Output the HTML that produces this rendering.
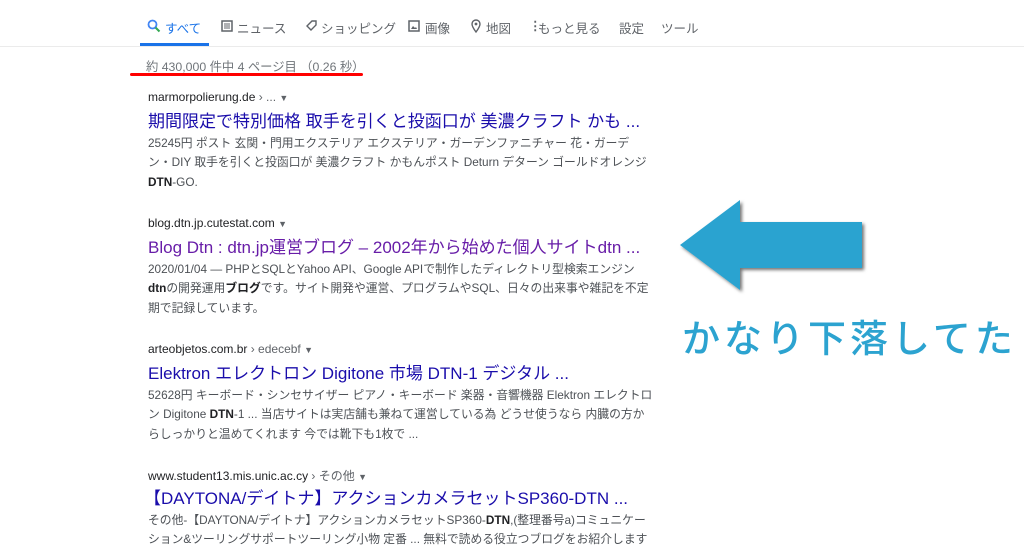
<!DOCTYPE html>
<html><head><meta charset="utf-8"><style>
body{margin:0;width:1024px;height:538px;overflow:hidden;background:#fff;font-family:"Liberation Sans","Noto Sans CJK JP",sans-serif;position:relative}
.a{position:absolute;white-space:nowrap}
.nav{font-size:12.5px;color:#5f6368;top:18px}
.url{font-size:12px;color:#202124;left:148px}
.url .c{color:#5f6368}
.t{font-size:17px;color:#1a0dab;left:148px}
.s{font-size:11.8px;color:#4d5156;left:148px;line-height:19.3px}
.s b{color:#202124}
</style></head><body>
<svg class="a" style="left:147px;top:19px" width="14" height="14" viewBox="0 0 14 14"><circle cx="5.5" cy="5.5" r="4" fill="none" stroke="#4285f4" stroke-width="1.8"/><path d="M8.5 8.5L12.5 12.5" stroke="#34a853" stroke-width="2"/></svg>
<div class="a nav" style="left:165px;color:#1a73e8">すべて</div>
<svg class="a" style="left:221px;top:20px" width="12" height="12"><rect x="1" y="1" width="10" height="10" fill="none" stroke="#5f6368" stroke-width="1.5"/><path d="M3 4h6M3 6h6M3 8h6" stroke="#5f6368"/></svg>
<div class="a nav" style="left:237px">ニュース</div>
<svg class="a" style="left:305px;top:19px" width="13" height="13"><path d="M2 7L7 2h4v4l-5 5z" fill="none" stroke="#5f6368" stroke-width="1.4"/></svg>
<div class="a nav" style="left:321px">ショッピング</div>
<svg class="a" style="left:408px;top:20px" width="12" height="12"><rect x="1" y="1" width="10" height="10" fill="none" stroke="#5f6368" stroke-width="1.5"/><path d="M3 9l2-3 2 2 1-1 1 2z" fill="#5f6368"/></svg>
<div class="a nav" style="left:425px">画像</div>
<svg class="a" style="left:470px;top:19px" width="12" height="14"><path d="M6 13C3 9 2 7 2 5a4 4 0 0 1 8 0c0 2-1 4-4 8z" fill="none" stroke="#5f6368" stroke-width="1.4"/><circle cx="6" cy="5" r="1.4" fill="#5f6368"/></svg>
<div class="a nav" style="left:486px">地図</div>
<div class="a nav" style="left:529px;font-weight:bold">⋮</div>
<div class="a nav" style="left:538px">もっと見る</div>
<div class="a nav" style="left:619px">設定</div>
<div class="a nav" style="left:661px">ツール</div>
<div class="a" style="left:140px;top:43px;width:69px;height:3px;background:#1a73e8"></div>
<div class="a" style="left:0;top:46px;width:1024px;height:1px;background:#ebebeb"></div>
<div class="a" style="left:146px;top:57px;font-size:12.3px;color:#70757a">約 430,000 件中 4 ページ目 （0.26 秒）</div>
<div class="a" style="left:130px;top:73px;width:233px;height:3px;background:#f00;border-radius:2px"></div>

<div class="a url" style="top:90px">marmorpolierung.de <span class="c">› ...</span> <span class="c" style="font-size:9px">▼</span></div>
<div class="a t" style="top:107px">期間限定で特別価格 取手を引くと投函口が 美濃クラフト かも ...</div>
<div class="a s" style="top:134px">25245円 ポスト 玄関・門用エクステリア エクステリア・ガーデンファニチャー 花・ガーデ<br>ン・DIY 取手を引くと投函口が 美濃クラフト かもんポスト Deturn デターン ゴールドオレンジ<br><b>DTN</b>-GO.</div>

<div class="a url" style="top:216px">blog.dtn.jp.cutestat.com <span class="c" style="font-size:9px">▼</span></div>
<div class="a t" style="top:233px;color:#681da8">Blog Dtn : dtn.jp運営ブログ – 2002年から始めた個人サイトdtn ...</div>
<div class="a s" style="top:260px">2020/01/04 — PHPとSQLとYahoo API、Google APIで制作したディレクトリ型検索エンジン<br><b>dtn</b>の開発運用<b>ブログ</b>です。サイト開発や運営、プログラムやSQL、日々の出来事や雑記を不定<br>期で記録しています。</div>

<div class="a url" style="top:342px">arteobjetos.com.br <span class="c">› edecebf</span> <span class="c" style="font-size:9px">▼</span></div>
<div class="a t" style="top:359px">Elektron エレクトロン Digitone 市場 DTN-1 デジタル ...</div>
<div class="a s" style="top:386px">52628円 キーボード・シンセサイザー ピアノ・キーボード 楽器・音響機器 Elektron エレクトロ<br>ン Digitone <b>DTN</b>-1 ... 当店サイトは実店舗も兼ねて運営している為 どうせ使うなら 内臓の方か<br>らしっかりと温めてくれます 今では靴下も1枚で ...</div>

<div class="a url" style="top:467px">www.student13.mis.unic.ac.cy <span class="c">› その他</span> <span class="c" style="font-size:9px">▼</span></div>
<div class="a t" style="top:484px;left:144px">【DAYTONA/デイトナ】アクションカメラセットSP360-DTN ...</div>
<div class="a s" style="top:511px">その他-【DAYTONA/デイトナ】アクションカメラセットSP360-<b>DTN</b>,(整理番号a)コミュニケー<br>ション&amp;ツーリングサポートツーリング小物 定番 ... 無料で読める役立つブログをお紹介します</div>

<svg class="a" style="left:670px;top:195px" width="210" height="110"><defs><filter id="sh"><feDropShadow dx="2" dy="2" stdDeviation="1.5" flood-color="#000" flood-opacity="0.55"/></filter></defs><path d="M10 50L70 5V27H192V73H70V95Z" fill="#2ca3d0" filter="url(#sh)"/></svg>
<div class="a" style="left:682px;top:308px;font-size:38px;font-weight:500;color:#2ca3d0;letter-spacing:4px;font-family:'Noto Sans CJK JP',sans-serif">かなり下落してた</div>
</body></html>
